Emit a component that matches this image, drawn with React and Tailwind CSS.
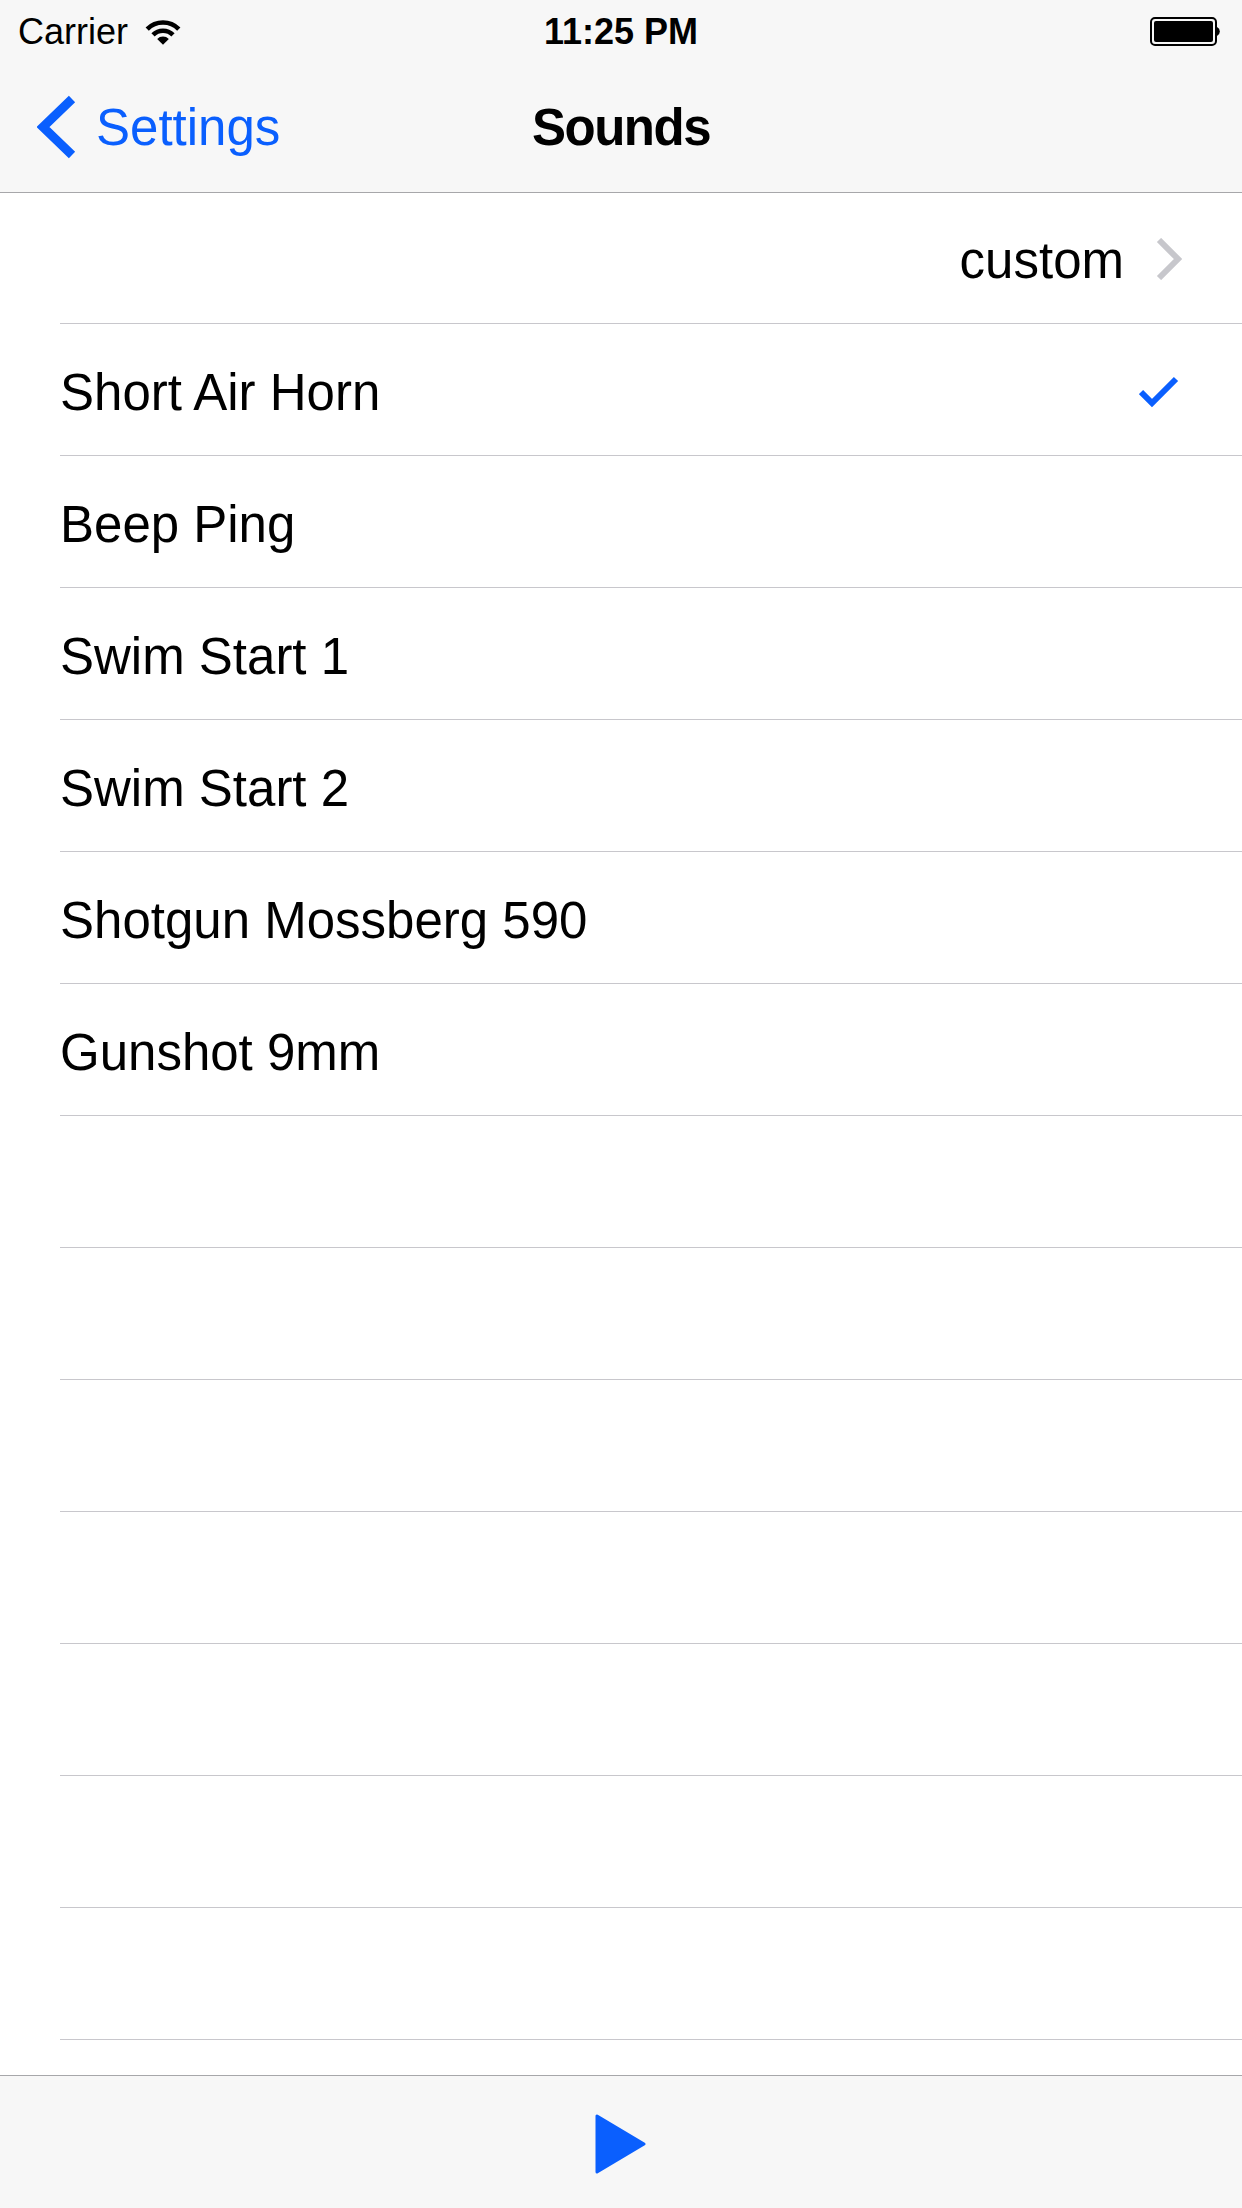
import React from 'react';

const sounds = [
  { name: 'Short Air Horn', selected: true },
  { name: 'Beep Ping' },
  { name: 'Swim Start 1' },
  { name: 'Swim Start 2' },
  { name: 'Shotgun Mossberg 590' },
  { name: 'Gunshot 9mm' },
];

function Wifi() {
  return (
    <svg width="38" height="27" viewBox="0 0 37 26" className="ml-[16px]">
      <path d="M18.5 25 L12.84 19.34 A8 8 0 0 1 24.16 19.34 Z" fill="#000" />
      <path d="M8.78 15.28 A13.75 13.75 0 0 1 28.22 15.28" fill="none" stroke="#000" strokeWidth="4.5" />
      <path d="M3.12 9.62 A21.75 21.75 0 0 1 33.88 9.62" fill="none" stroke="#000" strokeWidth="4.5" />
    </svg>
  );
}

function Battery() {
  return (
    <svg width="74" height="30" viewBox="0 0 74 30">
      <rect x="1" y="1" width="65" height="27" rx="4" fill="none" stroke="#000" strokeWidth="2" />
      <rect x="4" y="4" width="59" height="21" rx="2" fill="#000" />
      <path d="M67 10 A5 5 0 0 1 67 19 Z" fill="#000" />
    </svg>
  );
}

function Row({ children, right }) {
  return (
    <div className="pl-[60px]">
      <div className="h-[132px] border-b border-[#c8c7cc] flex items-center justify-between">
        <span className="text-[51px] text-black leading-none pt-[5px]">{children}</span>
        {right}
      </div>
    </div>
  );
}

export default function App() {
  return (
    <div
      className="w-[1242px] h-[2208px] flex flex-col bg-white overflow-hidden"
      style={{ fontFamily: '"Liberation Sans", Arial, sans-serif' }}
    >
      {/* Status + nav */}
      <div className="h-[193px] bg-[#f7f7f7] border-b border-[#a7a7aa] flex flex-col">
        <div className="h-[60px] grid grid-cols-[1fr_auto_1fr] items-center px-[18px] pt-[4px]">
          <div className="flex items-center">
            <span className="text-[36px] text-black leading-none">Carrier</span>
            <Wifi />
          </div>
          <span className="text-[36px] font-bold text-black leading-none">11:25 PM</span>
          <div className="flex justify-end">
            <Battery />
          </div>
        </div>
        <div className="flex-1 grid grid-cols-[1fr_auto_1fr] items-center pt-[2px]">
          <div className="flex items-center pl-[37px]">
            <svg width="40" height="64" viewBox="0 0 40 64">
              <path d="M35 4 L6 32 L35 60" fill="none" stroke="#0a5ffe" strokeWidth="9" />
            </svg>
            <span className="ml-[19px] text-[51px] text-[#0a5ffe] leading-none">Settings</span>
          </div>
          <span className="text-[51px] font-bold tracking-[-1.5px] text-black leading-none">Sounds</span>
          <div />
        </div>
      </div>

      {/* List */}
      <div className="flex-1 overflow-hidden">
        <div className="pl-[60px]">
          <div className="h-[131px] border-b border-[#c8c7cc] flex items-center justify-end pr-[60px]">
            <span className="text-[51px] text-black leading-none pt-[5px]">custom</span>
            <svg width="26" height="42" viewBox="0 0 26 42" className="ml-[32px] mt-[2px]">
              <path d="M3 2 L22 21 L3 40" fill="none" stroke="#c7c7cc" strokeWidth="6" />
            </svg>
          </div>
        </div>
        {sounds.map((s) => (
          <Row
            key={s.name}
            right={
              s.selected ? (
                <svg width="40" height="32" viewBox="0 0 40 32" className="mr-[63px] mt-[4px]">
                  <path d="M2 16 L13 27 L37 3" fill="none" stroke="#0a5ffe" strokeWidth="6" />
                </svg>
              ) : null
            }
          >
            {s.name}
          </Row>
        ))}
        {Array.from({ length: 7 }).map((_, i) => (
          <Row key={i} />
        ))}
      </div>

      {/* Toolbar */}
      <div className="h-[133px] bg-[#f7f7f7] border-t border-[#a7a7aa] flex items-center justify-center">
        <svg width="54" height="60" viewBox="0 0 54 60" className="ml-[-1px] mt-[3px]">
          <path d="M3 2 L3 58 L50 30 Z" fill="#0a5ffe" stroke="#0a5ffe" strokeWidth="3" strokeLinejoin="round" />
        </svg>
      </div>
    </div>
  );
}
